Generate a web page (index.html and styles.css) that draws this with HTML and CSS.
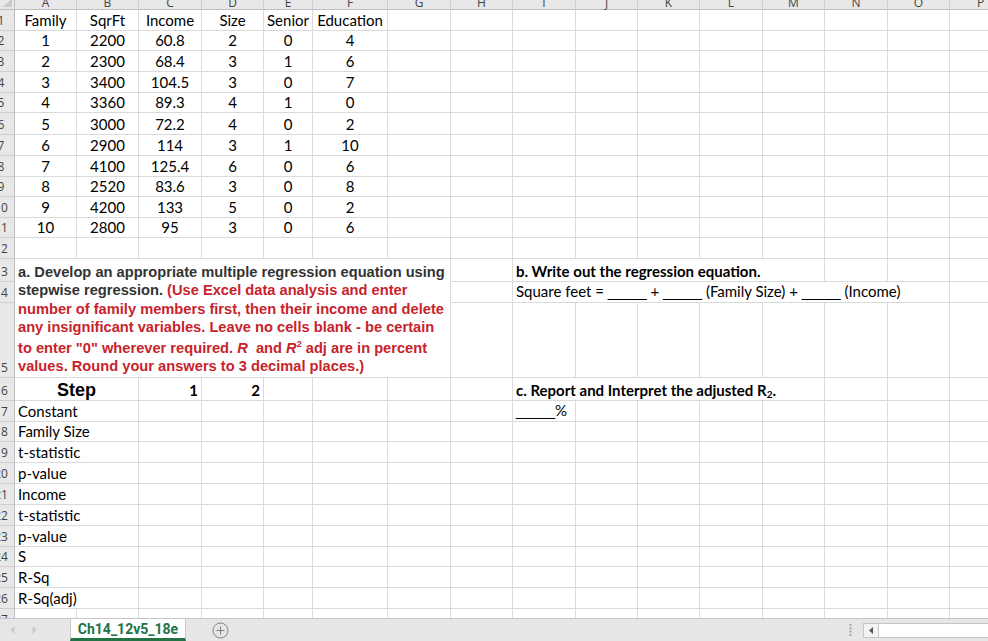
FILE: index.html
```html
<!DOCTYPE html>
<html lang="en">
<head>
  <meta charset="UTF-8" />
  <title>Ch14_12v5_18e - Stepwise Regression</title>
  <link rel="stylesheet" href="styles.css">
</head>
<body>
  <div class="grid-wrap">
    <table class="sheet">
      <colgroup>
        <col class="w-rn">
        <col class="w62"><col class="w62"><col class="w63"><col class="w62"><col class="w49"><col class="w75">
        <col class="w63"><col class="w62"><col class="w63"><col class="w62"><col class="w62">
        <col class="w63"><col class="w62"><col class="w63"><col class="w62"><col class="w62">
      </colgroup>

      <tr class="h20 head">
        <th class="corner"><svg width="9" height="9" viewBox="0 0 9 9"><path d="M9 0V9H0Z" fill="#c9c9c9"/></svg></th>
        <th class="ch">A</th><th class="ch">B</th><th class="ch">C</th><th class="ch">D</th><th class="ch">E</th><th class="ch">F</th>
        <th class="ch">G</th><th class="ch">H</th><th class="ch">I</th><th class="ch">J</th><th class="ch">K</th>
        <th class="ch">L</th><th class="ch">M</th><th class="ch">N</th><th class="ch">O</th><th class="ch">P</th>
      </tr>

      <!-- data table -->
      <tr class="h21 data"><th class="rn">1</th><td>Family</td><td>SqrFt</td><td>Income</td><td>Size</td><td>Senior</td><td>Education</td><td></td><td></td><td></td><td></td><td></td><td></td><td></td><td></td><td></td><td></td></tr>
      <tr class="h20 data"><th class="rn">2</th><td>1</td><td>2200</td><td>60.8</td><td>2</td><td>0</td><td>4</td><td></td><td></td><td></td><td></td><td></td><td></td><td></td><td></td><td></td><td></td></tr>
      <tr class="h21 data"><th class="rn">3</th><td>2</td><td>2300</td><td>68.4</td><td>3</td><td>1</td><td>6</td><td></td><td></td><td></td><td></td><td></td><td></td><td></td><td></td><td></td><td></td></tr>
      <tr class="h21 data"><th class="rn">4</th><td>3</td><td>3400</td><td>104.5</td><td>3</td><td>0</td><td>7</td><td></td><td></td><td></td><td></td><td></td><td></td><td></td><td></td><td></td><td></td></tr>
      <tr class="h20 data"><th class="rn">5</th><td>4</td><td>3360</td><td>89.3</td><td>4</td><td>1</td><td>0</td><td></td><td></td><td></td><td></td><td></td><td></td><td></td><td></td><td></td><td></td></tr>
      <tr class="h22 data"><th class="rn">6</th><td>5</td><td>3000</td><td>72.2</td><td>4</td><td>0</td><td>2</td><td></td><td></td><td></td><td></td><td></td><td></td><td></td><td></td><td></td><td></td></tr>
      <tr class="h21 data"><th class="rn">7</th><td>6</td><td>2900</td><td>114</td><td>3</td><td>1</td><td>10</td><td></td><td></td><td></td><td></td><td></td><td></td><td></td><td></td><td></td><td></td></tr>
      <tr class="h21 data"><th class="rn">8</th><td>7</td><td>4100</td><td>125.4</td><td>6</td><td>0</td><td>6</td><td></td><td></td><td></td><td></td><td></td><td></td><td></td><td></td><td></td><td></td></tr>
      <tr class="h20 data"><th class="rn">9</th><td>8</td><td>2520</td><td>83.6</td><td>3</td><td>0</td><td>8</td><td></td><td></td><td></td><td></td><td></td><td></td><td></td><td></td><td></td><td></td></tr>
      <tr class="h21 data"><th class="rn">10</th><td>9</td><td>4200</td><td>133</td><td>5</td><td>0</td><td>2</td><td></td><td></td><td></td><td></td><td></td><td></td><td></td><td></td><td></td><td></td></tr>
      <tr class="h20 data"><th class="rn">11</th><td>10</td><td>2800</td><td>95</td><td>3</td><td>0</td><td>6</td><td></td><td></td><td></td><td></td><td></td><td></td><td></td><td></td><td></td><td></td></tr>
      <tr class="h21"><th class="rn">12</th><td></td><td></td><td></td><td></td><td></td><td></td><td></td><td></td><td></td><td></td><td></td><td></td><td></td><td></td><td></td><td></td></tr>

      <!-- question block -->
      <tr class="h23">
        <th class="rn">13</th>
        <td class="note" colspan="7" rowspan="3">
          <span class="ln"><span class="dark">a. Develop an appropriate multiple regression equation using</span></span>
          <span class="ln"><span class="dark">stepwise regression.</span> (Use Excel data analysis and enter</span>
          <span class="ln">number of family members first, then their income and delete</span>
          <span class="ln">any insignificant variables. Leave no cells blank - be certain</span>
          <span class="ln tall">to enter "0" wherever required. <i>R</i>&nbsp; and <i>R</i><sup>2</sup> adj are in percent</span>
          <span class="ln">values. Round your answers to 3 decimal places.)</span>
        </td>
        <td></td><td class="b" colspan="5">b. Write out the regression equation.</td><td></td><td></td><td></td>
      </tr>
      <tr class="h21"><th class="rn">14</th><td></td><td colspan="7">Square feet = <span class="blank">_____</span> + <span class="blank">_____</span> (Family Size) + <span class="blank">_____</span> (Income)</td><td></td></tr>
      <tr class="h75"><th class="rn">15</th><td></td><td></td><td></td><td></td><td></td><td></td><td></td><td></td><td></td></tr>

      <!-- step results -->
      <tr class="h23">
        <th class="rn">16</th><td class="step" colspan="2">Step</td><td class="b r">1</td><td class="b r">2</td><td></td><td></td><td></td><td></td>
        <td class="b" colspan="5">c. Report and Interpret the adjusted R<sub>2</sub>.</td><td></td><td></td><td></td>
      </tr>
      <tr class="h21"><th class="rn">17</th><td colspan="2">Constant</td><td></td><td></td><td></td><td></td><td></td><td></td><td><span class="blank">_____</span>%</td><td></td><td></td><td></td><td></td><td></td><td></td><td></td></tr>
      <tr class="h20"><th class="rn">18</th><td colspan="2">Family Size</td><td></td><td></td><td></td><td></td><td></td><td></td><td></td><td></td><td></td><td></td><td></td><td></td><td></td><td></td></tr>
      <tr class="h21"><th class="rn">19</th><td colspan="2">t-statistic</td><td></td><td></td><td></td><td></td><td></td><td></td><td></td><td></td><td></td><td></td><td></td><td></td><td></td><td></td></tr>
      <tr class="h21"><th class="rn">20</th><td colspan="2">p-value</td><td></td><td></td><td></td><td></td><td></td><td></td><td></td><td></td><td></td><td></td><td></td><td></td><td></td><td></td></tr>
      <tr class="h21"><th class="rn">21</th><td colspan="2">Income</td><td></td><td></td><td></td><td></td><td></td><td></td><td></td><td></td><td></td><td></td><td></td><td></td><td></td><td></td></tr>
      <tr class="h21"><th class="rn">22</th><td colspan="2">t-statistic</td><td></td><td></td><td></td><td></td><td></td><td></td><td></td><td></td><td></td><td></td><td></td><td></td><td></td><td></td></tr>
      <tr class="h21"><th class="rn">23</th><td colspan="2">p-value</td><td></td><td></td><td></td><td></td><td></td><td></td><td></td><td></td><td></td><td></td><td></td><td></td><td></td><td></td></tr>
      <tr class="h20"><th class="rn">24</th><td colspan="2">S</td><td></td><td></td><td></td><td></td><td></td><td></td><td></td><td></td><td></td><td></td><td></td><td></td><td></td><td></td></tr>
      <tr class="h21"><th class="rn">25</th><td colspan="2">R-Sq</td><td></td><td></td><td></td><td></td><td></td><td></td><td></td><td></td><td></td><td></td><td></td><td></td><td></td><td></td></tr>
      <tr class="h21"><th class="rn">26</th><td colspan="2">R-Sq(adj)</td><td></td><td></td><td></td><td></td><td></td><td></td><td></td><td></td><td></td><td></td><td></td><td></td><td></td><td></td></tr>
      <tr class="h21"><th class="rn">27</th><td></td><td></td><td></td><td></td><td></td><td></td><td></td><td></td><td></td><td></td><td></td><td></td><td></td><td></td><td></td><td></td></tr>
    </table>
  </div>

  <div class="tabbar">
    <div class="tab-nav">
      <svg width="5" height="8" viewBox="0 0 5 8"><path d="M4.5 0V8L0.5 4Z" fill="#c9c9c9"/></svg>
      <svg width="5" height="8" viewBox="0 0 5 8"><path d="M0.5 0V8L4.5 4Z" fill="#c9c9c9"/></svg>
    </div>
    <div class="tab active">Ch14_12v5_18e</div>
    <div class="tab-add">
      <svg width="17" height="17" viewBox="0 0 17 17"><circle cx="8.5" cy="8.5" r="7.5" fill="none" stroke="#808080"/><path d="M8.5 4.5V12.5M4.5 8.5H12.5" stroke="#808080"/></svg>
    </div>
    <div class="spacer"></div>
    <div class="split">
      <svg width="3" height="12" viewBox="0 0 3 12"><rect x="0.5" y="0" width="2" height="2" fill="#a6a6a6"/><rect x="0.5" y="3.3" width="2" height="2" fill="#a6a6a6"/><rect x="0.5" y="6.6" width="2" height="2" fill="#a6a6a6"/><rect x="0.5" y="10" width="2" height="2" fill="#a6a6a6"/></svg>
    </div>
    <div class="hscroll">
      <div class="hs-btn"><svg width="4" height="7" viewBox="0 0 4 7"><path d="M4 0V7L0 3.5Z" fill="#5a5a5a"/></svg></div>
      <div class="hs-track"></div>
    </div>
  </div>
</body>
</html>
```

FILE: styles.css
```css
body {
  margin: 0;
  width: 988px;
  height: 641px;
  overflow: hidden;
  display: flex;
  flex-direction: column;
  background: #fff;
  font-family: Lato, "Open Sans", sans-serif;
}

.grid-wrap {
  height: 618px;
  overflow: hidden;
  flex: none;
}

/* grid is scrolled a little: half of the column headers and row numbers are off screen */
.sheet {
  margin: -10px 0 0 -12px;
  border-collapse: separate;
  border-spacing: 0;
  table-layout: fixed;
  width: 1024px;
}
.w-rn { width: 27px; }
.w49 { width: 49px; }
.w62 { width: 62px; }
.w63 { width: 63px; }
.w75 { width: 75px; }

.h20 { height: 20px; }
.h21 { height: 21px; }
.h22 { height: 22px; }
.h23 { height: 23px; }
.h75 { height: 75px; }

.sheet td {
  border-right: 1px solid #dadada;
  border-bottom: 1px solid #dadada;
  padding: 0 3px 1px;
  font-size: 15px;
  line-height: 18px;
  color: #000;
  white-space: nowrap;
  overflow: hidden;
  vertical-align: bottom;
  text-align: left;
}
.sheet tr.data td { text-align: center; }
.sheet td.b { font-weight: 700; }
.sheet td.r { text-align: right; }

/* answer blanks: wider underscores */
.blank {
  font-family: "Liberation Sans", Arial, sans-serif;
  font-size: 14px;
}

.sheet th {
  background: #e8e8e8;
  color: #444;
  font-family: "Open Sans", sans-serif;
  font-weight: 400;
  font-size: 12px;
  padding: 0;
  border-right: 1px solid #cfcfcf;
  border-bottom: 1px solid #cfcfcf;
  vertical-align: bottom;
}
.sheet th.ch {
  line-height: 12px;
  border-bottom-color: #bdbdbd;
}
.sheet th.corner {
  text-align: right;
  line-height: 0;
  padding: 0 2px 2px 0;
  border-bottom-color: #bdbdbd;
  border-right-color: #bdbdbd;
}
.sheet th.rn {
  line-height: 16px;
  padding-bottom: 1px;
  text-align: center;
  border-right-color: #bdbdbd;
}

.sheet td.note {
  vertical-align: top;
  padding: 4px 3px 0;
  font-family: "Liberation Sans", Arial, sans-serif;
  font-weight: 700;
  font-size: 14.67px;
  line-height: 18.3px;
  color: #c8232c;
}
.note .dark { color: #333; }
.note .ln { display: block; }
.note .ln.tall { padding-top: 2.5px; }
.note sup {
  font-size: 9px;
  line-height: 0;
  vertical-align: 6px;
}

.sheet td.step {
  text-align: center;
  font-family: "Liberation Sans", Arial, sans-serif;
  font-weight: 700;
  font-size: 18px;
}

.sheet sub {
  font-size: 10px;
  line-height: 0;
  vertical-align: -2px;
}

/* sheet tabs and horizontal scroll */
.tabbar {
  flex: none;
  height: 23px;
  box-sizing: border-box;
  background: #e6e6e6;
  border-top: 1px solid #c6c6c6;
  display: flex;
  align-items: stretch;
}
.tab-nav {
  width: 70px;
  display: flex;
  align-items: center;
  gap: 17px;
  padding-left: 10px;
  box-sizing: border-box;
}
.tab {
  width: 116px;
  box-sizing: border-box;
  background: #fff;
  border-left: 1px solid #c6c6c6;
  border-right: 1px solid #c6c6c6;
  border-bottom: 3px solid #217346;
  color: #217346;
  font-family: Roboto, sans-serif;
  font-weight: 700;
  font-size: 14px;
  display: flex;
  align-items: center;
  justify-content: center;
  padding-top: 1px;
}
.tab-add {
  margin-left: 26px;
  display: flex;
  align-items: center;
}
.spacer { flex: 1; }
.split {
  display: flex;
  align-items: center;
  margin-right: 11px;
}
.hscroll {
  width: 125px;
  height: 15px;
  align-self: center;
  display: flex;
}
.hs-btn {
  width: 15px;
  box-sizing: border-box;
  background: #f4f4f4;
  border: 1px solid #c6c6c6;
  border-right: none;
  display: flex;
  align-items: center;
  justify-content: center;
}
.hs-track {
  flex: 1;
  background: #fff;
  border: 1px solid #c6c6c6;
  border-right: none;
}
```
